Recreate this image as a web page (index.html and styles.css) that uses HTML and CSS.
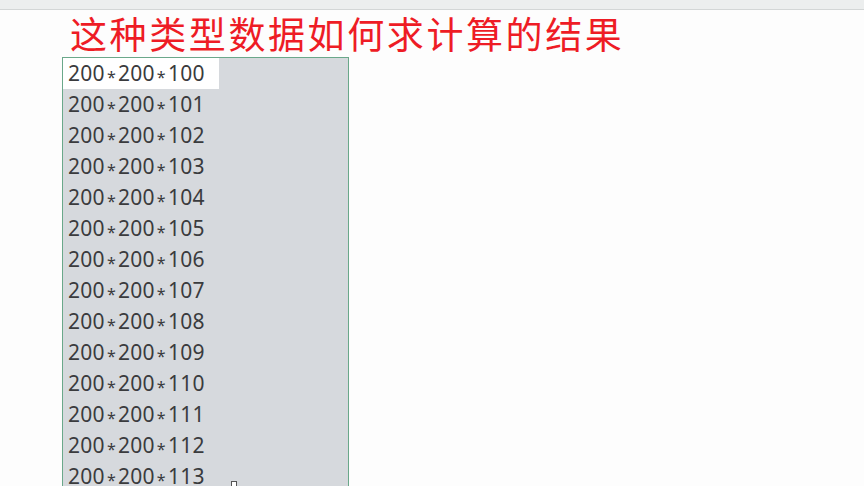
FILE: index.html
```html
<!DOCTYPE html>
<html lang="zh">
<head>
<meta charset="utf-8">
<link rel="stylesheet" href="styles.css">
</head>
<body>
<div class="topbar"></div>
<h1 class="title">这种类型数据如何求计算的结果</h1>
<div class="sheet">
  <div class="cell active">200<span class="op">*</span>200<span class="op">*</span>100</div>
  <div class="cell">200<span class="op">*</span>200<span class="op">*</span>101</div>
  <div class="cell">200<span class="op">*</span>200<span class="op">*</span>102</div>
  <div class="cell">200<span class="op">*</span>200<span class="op">*</span>103</div>
  <div class="cell">200<span class="op">*</span>200<span class="op">*</span>104</div>
  <div class="cell">200<span class="op">*</span>200<span class="op">*</span>105</div>
  <div class="cell">200<span class="op">*</span>200<span class="op">*</span>106</div>
  <div class="cell">200<span class="op">*</span>200<span class="op">*</span>107</div>
  <div class="cell">200<span class="op">*</span>200<span class="op">*</span>108</div>
  <div class="cell">200<span class="op">*</span>200<span class="op">*</span>109</div>
  <div class="cell">200<span class="op">*</span>200<span class="op">*</span>110</div>
  <div class="cell">200<span class="op">*</span>200<span class="op">*</span>111</div>
  <div class="cell">200<span class="op">*</span>200<span class="op">*</span>112</div>
  <div class="cell">200<span class="op">*</span>200<span class="op">*</span>113</div>
  <span class="cursor"></span>
</div>
</body>
</html>
```
FILE: styles.css
```css
html, body {
  margin: 0;
  padding: 0;
  background: #fdfdfd;
  height: 486px;
  overflow: hidden;
}
.topbar {
  height: 9px;
  background: #eceeee;
  border-bottom: 1px solid #d3d6d6;
}
.title {
  margin: 0 0 0 70px;
  font-family: "Noto Sans CJK SC", sans-serif;
  font-weight: 400;
  font-size: 37px;
  line-height: 47px;
  letter-spacing: 2.6px;
  color: #ee1c25;
}
.sheet {
  position: relative;
  margin-left: 62px;
  width: 285px;
  height: 440px;
  background: #d6d9dd;
  border: 1px solid #6aa88a;
  border-bottom: none;
  overflow: hidden;
}
.cell {
  height: 31px;
  line-height: 31px;
  padding-left: 5px;
  font-family: "Noto Sans", sans-serif;
  font-size: 21px;
  letter-spacing: 0.3px;
  color: #3a3b3d;
  white-space: nowrap;
}
.op {
  display: inline-block;
  width: 13px;
  text-align: center;
  font-size: 16px;
  vertical-align: -1.5px;
}
.cell.active {
  width: 151px;
  background: #ffffff;
}
.cursor {
  position: absolute;
  left: 168px;
  top: 423px;
  width: 4px;
  height: 6px;
  border: 1px solid #555;
  background: #fff;
}
```
